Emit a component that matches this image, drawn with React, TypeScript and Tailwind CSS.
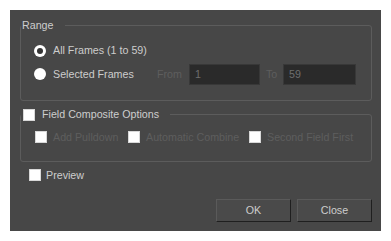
import React from "react";

const font = { fontFamily: '"Liberation Sans", Arial, sans-serif' };

function Radio({ checked }: { checked?: boolean }) {
  return checked ? (
    <span className="w-[12px] h-[12px] rounded-full bg-white flex items-center justify-center shrink-0">
      <span className="w-[6px] h-[6px] rounded-full bg-[#353535]" />
    </span>
  ) : (
    <span className="w-[12px] h-[12px] rounded-full bg-white shrink-0" />
  );
}

function Check() {
  return <span className="w-[12px] h-[12px] bg-white border border-[#d8d8d8] shrink-0" />;
}

export default function App() {
  return (
    <div className="w-[391px] h-[241px] bg-white pt-[10px] pl-[10px]" style={font}>
      <div className="w-[371px] h-[221px] bg-[#474747] flex flex-col pt-[8px] pl-[10px] pr-[9px] text-[10.7px] text-[#cdcdcd]">
        <fieldset className="border border-[#5c5c5c] rounded-[3px] p-0 m-0 w-[352px]">
          <legend className="w-[44px] h-[15px] leading-[15px] pl-[1px]">Range</legend>
          <div className="flex flex-col gap-[3px] pt-[7px] pb-[15px] pl-[13px]">
            <div className="flex items-center h-[21px]">
              <Radio checked />
              <span className="ml-[7px]">All Frames (1 to 59)</span>
            </div>
            <div className="flex items-center h-[21px]">
              <div className="flex items-center w-[123px]">
                <Radio />
                <span className="ml-[7px]">Selected Frames</span>
              </div>
              <span className="w-[32px] text-[#5e5e5e]">From</span>
              <div className="w-[71px] h-[21px] bg-[#2a2a2a] border border-[#383838] flex items-center pl-[5px] text-[#6e6e6e]">1</div>
              <span className="w-[17px] ml-[6px] text-[#5e5e5e]">To</span>
              <div className="w-[73px] h-[21px] bg-[#2a2a2a] border border-[#383838] flex items-center pl-[5px] text-[#6e6e6e]">59</div>
            </div>
          </div>
        </fieldset>

        <fieldset className="border border-[#5c5c5c] rounded-[3px] p-0 m-0 mt-[6px] w-[352px]">
          <legend className="w-[149px] h-[15px] pl-[2px] flex items-center">
            <Check />
            <span className="ml-[7px]">Field Composite Options</span>
          </legend>
          <div className="flex items-center h-[12px] mt-[9px] mb-[18px] pl-[14px] text-[#5e5e5e]">
            <div className="flex items-center w-[93px]">
              <Check />
              <span className="ml-[6px]">Add Pulldown</span>
            </div>
            <div className="flex items-center w-[121px]">
              <Check />
              <span className="ml-[6px]">Automatic Combine</span>
            </div>
            <div className="flex items-center">
              <Check />
              <span className="ml-[6px]">Second Field First</span>
            </div>
          </div>
        </fieldset>

        <div className="flex items-center h-[12px] mt-[7px] ml-[9px]">
          <Check />
          <span className="ml-[5px]">Preview</span>
        </div>

        <div className="flex justify-end gap-[6px] mt-[18px]">
          <button className="w-[75px] h-[23px] bg-[#4a4a4a] border border-t-[#5a5a5a] border-l-[#5a5a5a] border-r-[#1f1f1f] border-b-[#1f1f1f] text-[#cdcdcd] leading-none">OK</button>
          <button className="w-[75px] h-[23px] bg-[#4a4a4a] border border-t-[#5a5a5a] border-l-[#5a5a5a] border-r-[#1f1f1f] border-b-[#1f1f1f] text-[#cdcdcd] leading-none">Close</button>
        </div>
      </div>
    </div>
  );
}
